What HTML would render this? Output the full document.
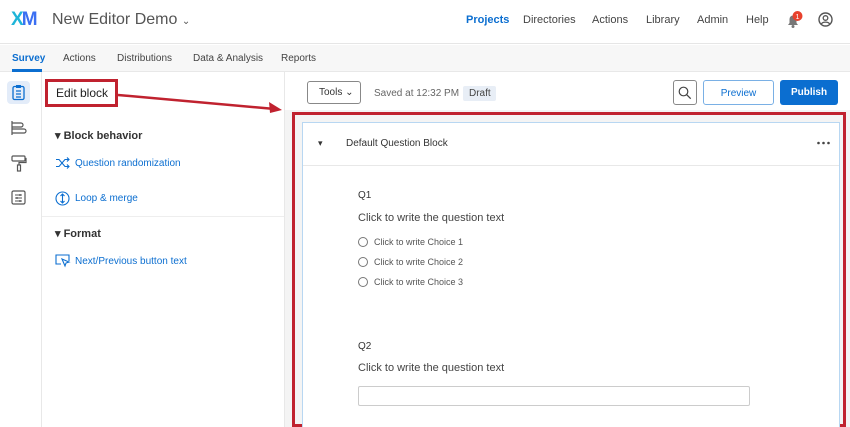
<!DOCTYPE html>
<html><head><style>
*{margin:0;padding:0;box-sizing:border-box}
body{width:850px;height:427px;overflow:hidden;font-family:"Liberation Sans",sans-serif;background:#fff;position:relative;color:#333}
.a{position:absolute}
.nav{font-size:11px;color:#444}
</style></head><body>
<div class="a" style="left:0;top:0;width:850px;height:44px;background:#fff;border-bottom:1px solid #e6e6e6"></div>
<div class="a" style="left:11px;top:9px;font-size:19px;font-weight:bold;letter-spacing:-2px;color:#1fb5d8">X<span style="color:#3b6ff2">M</span></div>
<div class="a" style="left:52px;top:11px;font-size:16px;color:#555">New Editor Demo <span style="font-size:10px">⌄</span></div>
<div class="a nav" style="left:466px;top:14px;color:#0b6ed0;font-weight:bold">Projects</div>
<div class="a nav" style="left:523px;top:14px">Directories</div>
<div class="a nav" style="left:592px;top:14px">Actions</div>
<div class="a nav" style="left:646px;top:14px">Library</div>
<div class="a nav" style="left:697px;top:14px">Admin</div>
<div class="a nav" style="left:746px;top:14px">Help</div>
<svg class="a" style="left:783px;top:9px" width="22" height="20"><path d="M5 16h10l-1.5-2V10a3.5 3.5 0 0 0-7 0v4z" fill="#777"/><circle cx="10" cy="17.5" r="1.5" fill="#777"/><circle cx="14.5" cy="7" r="5" fill="#e8412c"/><text x="14.5" y="10" font-size="7" fill="#fff" text-anchor="middle" font-family="Liberation Sans">1</text></svg>
<svg class="a" style="left:818px;top:12px" width="15" height="15"><circle cx="7.5" cy="7.5" r="6.5" fill="none" stroke="#555" stroke-width="1.4"/><circle cx="7.5" cy="6" r="2.3" fill="none" stroke="#555" stroke-width="1.3"/><path d="M3.3 12c1.5-2.5 6.9-2.5 8.4 0" fill="none" stroke="#555" stroke-width="1.3"/></svg>
<div class="a" style="left:0;top:45px;width:850px;height:27px;background:#f7f7f7;border-bottom:1px solid #e8e8e8"></div>
<div class="a" style="left:12px;top:53px;font-size:10px;font-weight:bold;color:#0b6ed0">Survey</div>
<div class="a" style="left:12px;top:69px;width:30px;height:3px;background:#0b6ed0"></div>
<div class="a nav" style="left:63px;top:53px;font-size:10px">Actions</div>
<div class="a nav" style="left:117px;top:53px;font-size:10px">Distributions</div>
<div class="a nav" style="left:193px;top:53px;font-size:10px">Data &amp; Analysis</div>
<div class="a nav" style="left:281px;top:53px;font-size:10px">Reports</div>
<div class="a" style="left:41px;top:72px;width:1px;height:355px;background:#e8e8e8"></div>
<div class="a" style="left:7px;top:81px;width:23px;height:23px;background:#e3ecf9;border-radius:4px"></div>
<svg class="a" style="left:11px;top:84px" width="15" height="17"><rect x="2" y="2.5" width="11" height="13" rx="1.5" fill="none" stroke="#0b6ed0" stroke-width="1.3"/><rect x="5" y="1" width="5" height="3" fill="#0b6ed0"/><path d="M5 7h5M5 10h5M5 13h5" stroke="#0b6ed0" stroke-width="1.2"/></svg>
<svg class="a" style="left:11px;top:120px" width="16" height="16"><path d="M1 1v14M1 3h9a2 2 0 0 1 0 4H1M1 9h12a2 2 0 0 1 0 4H1" fill="none" stroke="#555" stroke-width="1.2"/></svg>
<svg class="a" style="left:11px;top:155px" width="16" height="17"><rect x="1" y="1" width="13" height="5" rx="1" fill="none" stroke="#555" stroke-width="1.2"/><path d="M14 3.5h1v4H8v3" fill="none" stroke="#555" stroke-width="1.2"/><rect x="6.5" y="10" width="3" height="6" fill="none" stroke="#555" stroke-width="1.2"/></svg>
<svg class="a" style="left:11px;top:190px" width="16" height="16"><rect x="1" y="1" width="13" height="13" rx="1.5" fill="none" stroke="#555" stroke-width="1.2"/><path d="M4 5h7M4 8h7M4 11h7" stroke="#555" stroke-width="1"/><circle cx="9" cy="5" r="1" fill="#555"/><circle cx="6" cy="8" r="1" fill="#555"/><circle cx="9" cy="11" r="1" fill="#555"/></svg>
<div class="a" style="left:284px;top:72px;width:1px;height:355px;background:#e8e8e8"></div>
<div class="a" style="left:45px;top:79px;width:73px;height:28px;border:3px solid #c0222f"></div>
<div class="a" style="left:56px;top:86px;font-size:12px;color:#222">Edit block</div>
<div class="a" style="left:55px;top:129px;font-size:11px;font-weight:bold;color:#333">▾ Block behavior</div>
<svg class="a" style="left:56px;top:157px" width="14" height="12"><path d="M0 2.5h3l6 7h4M0 9.5h3l6-7h4M11 0.5l2 2-2 2M11 7.5l2 2-2 2" fill="none" stroke="#0b6ed0" stroke-width="1.1"/></svg>
<div class="a" style="left:75px;top:158px;font-size:10px;color:#0b6ed0">Question randomization</div>
<svg class="a" style="left:55px;top:191px" width="15" height="15"><circle cx="7.5" cy="7.5" r="6.5" fill="none" stroke="#0b6ed0" stroke-width="1.1"/><path d="M7.5 3v9M5.5 5l2-2 2 2M5.5 10l2 2 2-2" fill="none" stroke="#0b6ed0" stroke-width="1.1"/></svg>
<div class="a" style="left:75px;top:193px;font-size:10px;color:#0b6ed0">Loop &amp; merge</div>
<div class="a" style="left:42px;top:216px;width:242px;height:1px;background:#eee"></div>
<div class="a" style="left:55px;top:227px;font-size:11px;font-weight:bold;color:#333">▾ Format</div>
<svg class="a" style="left:55px;top:254px" width="16" height="14"><path d="M6 10H1V1h13v6" fill="none" stroke="#0b6ed0" stroke-width="1.1"/><path d="M7 5l7 3-3 1-1 3z" fill="none" stroke="#0b6ed0" stroke-width="1.1"/></svg>
<div class="a" style="left:75px;top:256px;font-size:10px;color:#0b6ed0">Next/Previous button text</div>
<svg class="a" style="left:115px;top:88px" width="175" height="30"><path d="M3 7L160 21" stroke="#c0222f" stroke-width="2.5"/><path d="M167 22l-13-8 1 11z" fill="#c0222f"/></svg>
<div class="a" style="left:285px;top:72px;width:565px;height:355px;background:#f4f4f4"></div>
<div class="a" style="left:285px;top:72px;width:565px;height:38px;background:#fff"></div>
<div class="a" style="left:307px;top:81px;width:54px;height:23px;border:1px solid #888;border-radius:3px;background:#fff;font-size:10px;padding:5px 0 0 11px;color:#333">Tools ⌄</div>
<div class="a" style="left:374px;top:88px;font-size:10px;color:#666">Saved at 12:32 PM</div>
<div class="a" style="left:463px;top:86px;width:33px;height:15px;background:#e8eef6;border-radius:2px;font-size:10px;padding:2px 0 0 6px;color:#444">Draft</div>
<div class="a" style="left:673px;top:80px;width:24px;height:25px;border:1px solid #888;border-radius:3px;background:#fff"></div>
<svg class="a" style="left:678px;top:86px" width="14" height="14"><circle cx="5.5" cy="5.5" r="4.3" fill="none" stroke="#444" stroke-width="1.2"/><path d="M8.7 8.7l4 4" stroke="#444" stroke-width="1.3"/></svg>
<div class="a" style="left:703px;top:80px;width:71px;height:25px;border:1px solid #7ab0e5;border-radius:3px;background:#fff;font-size:10px;color:#0b6ed0;text-align:center;padding-top:7px">Preview</div>
<div class="a" style="left:780px;top:80px;width:58px;height:25px;background:#0b6ed0;border-radius:3px;font-size:10px;color:#fff;text-align:center;padding-top:7px;font-weight:bold">Publish</div>
<div class="a" style="left:292px;top:112px;width:554px;height:315px;border:3px solid #c0222f"></div>
<div class="a" style="left:302px;top:122px;width:538px;height:305px;background:#fff;border:1px solid #b8d7f2;border-bottom:none"></div>
<div class="a" style="left:303px;top:165px;width:536px;height:1px;background:#e8e8e8"></div>
<div class="a" style="left:318px;top:138px;font-size:9px;color:#333">▾</div>
<div class="a" style="left:346px;top:138px;font-size:10px;color:#333">Default Question Block</div>
<svg class="a" style="left:817px;top:141px" width="13" height="4"><circle cx="1.5" cy="2" r="1.3" fill="#444"/><circle cx="6.5" cy="2" r="1.3" fill="#444"/><circle cx="11.5" cy="2" r="1.3" fill="#444"/></svg>
<div class="a" style="left:358px;top:190px;font-size:10px;color:#333">Q1</div>
<div class="a" style="left:358px;top:212px;font-size:11px;color:#444">Click to write the question text</div>
<div class="a" style="left:358px;top:237px;width:10px;height:10px;border:1px solid #777;border-radius:50%"></div>
<div class="a" style="left:374px;top:237px;font-size:9px;color:#555">Click to write Choice 1</div>
<div class="a" style="left:358px;top:257px;width:10px;height:10px;border:1px solid #777;border-radius:50%"></div>
<div class="a" style="left:374px;top:257px;font-size:9px;color:#555">Click to write Choice 2</div>
<div class="a" style="left:358px;top:277px;width:10px;height:10px;border:1px solid #777;border-radius:50%"></div>
<div class="a" style="left:374px;top:277px;font-size:9px;color:#555">Click to write Choice 3</div>
<div class="a" style="left:358px;top:341px;font-size:10px;color:#333">Q2</div>
<div class="a" style="left:358px;top:362px;font-size:11px;color:#444">Click to write the question text</div>
<div class="a" style="left:358px;top:386px;width:392px;height:20px;border:1px solid #ccc;border-radius:2px"></div>
</body></html>
